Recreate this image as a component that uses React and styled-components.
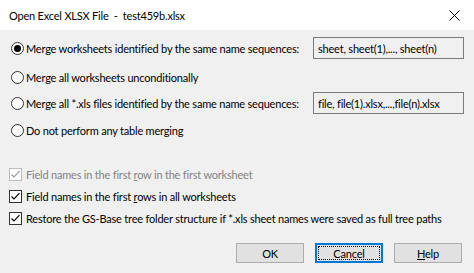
import React from "react";
import styled, { createGlobalStyle } from "styled-components";

const Global = createGlobalStyle`
  html, body { margin: 0; padding: 0; background: #f0f0f0; }
  body { font-family: Lato, "Noto Sans", sans-serif; font-size: 11px; letter-spacing: -0.2px; color: #000; }
`;

const Window = styled.div`
  width: 474px;
  height: 273px;
  display: flex;
  flex-direction: column;
  background: #f0f0f0;
  overflow: hidden;
`;

const TitleBar = styled.div`
  height: 30px;
  flex: none;
  background: #fff;
  display: flex;
  align-items: center;
  justify-content: space-between;
  padding-left: 9px;
  font-size: 11px;
`;

const Title = styled.span`
  white-space: pre;
`;

const CloseBtn = styled.div`
  width: 40px;
  height: 30px;
  display: flex;
  align-items: center;
  justify-content: center;
`;

const Body = styled.div`
  flex: 1;
  padding: 6px 10px 0 11px;
  display: flex;
  flex-direction: column;
`;

const Row = styled.div`
  display: flex;
  align-items: center;
  justify-content: space-between;
  height: ${(p) => p.$h}px;
  margin-top: ${(p) => p.$mt || 0}px;
`;

const Label = styled.label`
  display: flex;
  align-items: center;
  gap: 2px;
  white-space: pre;
  color: ${(p) => (p.$disabled ? "#838383" : "#000")};
`;

const RadioCircle = styled.span`
  width: 13px;
  height: 13px;
  box-sizing: border-box;
  border-radius: 50%;
  border: 1px solid #333;
  background: #fff;
  display: flex;
  align-items: center;
  justify-content: center;
  flex: none;
  &::after {
    content: "";
    width: 7px;
    height: 7px;
    border-radius: 50%;
    background: ${(p) => (p.$checked ? "#000" : "transparent")};
  }
`;

const CheckBox = styled.span`
  width: 13px;
  height: 13px;
  box-sizing: border-box;
  border: 1px solid ${(p) => (p.$disabled ? "#bcbcbc" : "#333")};
  background: #fff;
  display: flex;
  align-items: center;
  justify-content: center;
  flex: none;
  margin-right: 2px;
`;

const TextBox = styled.div`
  width: 151px;
  height: 22px;
  box-sizing: border-box;
  border: 1px solid #7a7a7a;
  background: #f0f0f0;
  padding: 0 4px;
  display: flex;
  align-items: center;
  white-space: nowrap;
  overflow: hidden;
`;

const CheckGroup = styled.div`
  display: flex;
  flex-direction: column;
  margin-left: -2px;
  margin-top: 22px;
`;

const Buttons = styled.div`
  display: flex;
  justify-content: flex-end;
  gap: 11px;
  margin-top: 14px;
  padding-right: 2px;
`;

const Button = styled.div`
  width: 68px;
  height: 20px;
  box-sizing: border-box;
  background: #e1e1e1;
  border: 1px solid ${(p) => (p.$focus ? "#0078d7" : "#adadad")};
  box-shadow: ${(p) => (p.$focus ? "inset 0 0 0 1px #0078d7" : "none")};
  display: flex;
  align-items: center;
  justify-content: center;
  position: relative;
  &::after {
    content: "";
    display: ${(p) => (p.$focus ? "block" : "none")};
    position: absolute;
    inset: 2px;
    border: 1px dotted #000;
  }
`;

const Check = ({ color }) => (
  <svg width="11" height="11" viewBox="0 0 11 11">
    <path d="M1.5 5.5 L4 8 L9.5 2.2" fill="none" stroke={color} strokeWidth="1.2" />
  </svg>
);

export default function App() {
  return (
    <>
      <Global />
      <Window>
        <TitleBar>
          <Title>Open Excel XLSX File  -  test459b.xlsx</Title>
          <CloseBtn>
            <svg width="11" height="11" viewBox="0 0 11 11">
              <path d="M0.5 0.5 L10.5 10.5 M10.5 0.5 L0.5 10.5" stroke="#000" strokeWidth="1" />
            </svg>
          </CloseBtn>
        </TitleBar>
        <Body>
          <Row $h={22} $mt={1}>
            <Label>
              <RadioCircle $checked />
              Merge worksheets identified by the same name sequences:
            </Label>
            <TextBox>sheet, sheet(1),..., sheet(n)</TextBox>
          </Row>
          <Row $h={22} $mt={7}>
            <Label>
              <RadioCircle />
              Merge all worksheets unconditionally
            </Label>
          </Row>
          <Row $h={22} $mt={4}>
            <Label>
              <RadioCircle />
              Merge all *.xls files identified by the same name sequences:
            </Label>
            <TextBox>file, file(1).xlsx,...,file(n).xlsx</TextBox>
          </Row>
          <Row $h={22} $mt={5}>
            <Label>
              <RadioCircle />
              Do not perform any table merging
            </Label>
          </Row>
          <CheckGroup>
            <Row $h={22}>
              <Label $disabled>
                <CheckBox $disabled>
                  <Check color="#9c9c9c" />
                </CheckBox>
                <span>Field names in the first <u>r</u>ow in the first worksheet</span>
              </Label>
            </Row>
            <Row $h={22}>
              <Label>
                <CheckBox>
                  <Check color="#000" />
                </CheckBox>
                <span>Field names in the first <u>r</u>ows in all worksheets</span>
              </Label>
            </Row>
            <Row $h={22}>
              <Label>
                <CheckBox>
                  <Check color="#000" />
                </CheckBox>
                Restore the GS-Base tree folder structure if *.xls sheet names were saved as full tree paths
              </Label>
            </Row>
          </CheckGroup>
          <Buttons>
            <Button>OK</Button>
            <Button $focus>Cancel</Button>
            <Button>
              <span>
                <u>H</u>elp
              </span>
            </Button>
          </Buttons>
        </Body>
      </Window>
    </>
  );
}
